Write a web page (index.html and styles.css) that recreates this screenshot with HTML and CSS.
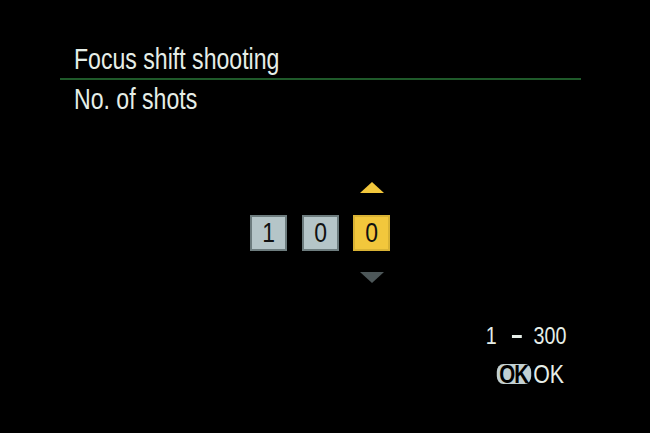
FILE: index.html
```html
<!DOCTYPE html>
<html lang="en">

<head>
    <meta charset="UTF-8">
    <meta name="viewport" content="width=device-width, initial-scale=1.0">
    <title>Focus shift shooting</title>
    <link rel="stylesheet" href="styles.css">
</head>

<body>
    <div class="screen">
        <div class="menuHead">
            <div class="title"><span class="narrow">Focus shift shooting</span></div>
        </div>
        <div class="subTitle"><span class="narrow">No. of shots</span></div>

        <div class="picker">
            <div class="digitCol">
                <span class="digit"><span class="narrowNum">1</span></span>
            </div>
            <div class="digitCol">
                <span class="digit"><span class="narrowNum">0</span></span>
            </div>
            <div class="digitCol active">
                <span class="arrow up"></span>
                <span class="digit"><span class="narrowNum">0</span></span>
                <span class="arrow down"></span>
            </div>
        </div>

        <div class="foot">
            <div class="range"><span>1</span><span class="dash"></span><span>300</span></div>
            <div class="okRow"><span class="okBtn">OK</span><span class="okText">OK</span></div>
        </div>
    </div>
</body>

</html>
```

FILE: styles.css
```css
html, body {
    margin: 0;
    background: #000;
}

.screen {
    width: 650px;
    height: 433px;
    display: flex;
    flex-direction: column;
    font-family: "Liberation Sans", Arial, sans-serif;
    color: #e6eee8;
}

/* la police de l'appareil est étroite : on resserre */
.narrow {
    display: inline-block;
    transform: scaleX(0.77);
    transform-origin: left center;
    white-space: nowrap;
}

.narrowNum {
    display: inline-block;
    transform: scaleX(0.85);
}

/* titre + ligne verte */
.menuHead {
    margin: 41px 0 0 60px;
    width: 521px;
    padding-bottom: 1px;
    border-bottom: 2px solid #1f5a2a;
}

.title {
    padding-left: 14px;
    font-size: 30px;
    line-height: 36px;
}

.subTitle {
    padding-left: 74px;
    margin-top: 1px;
    font-size: 30px;
    line-height: 36px;
}

.picker {
    display: flex;
    gap: 15px;
    margin: 65px 0 0 250px;
    align-items: center;
}

.digitCol {
    display: flex;
    flex-direction: column;
    align-items: center;
}

.digitCol:last-child {
    margin-left: -1px;
}

.digit {
    width: 33px;
    height: 32px;
    background: #b5c5c8;
    border: 2px solid #6d7c7e;
    color: #111;
    font-size: 27px;
    line-height: 33px;
    text-align: center;
}

.active .digit {
    background: #f2c73c;
    border-color: #d8b234;
}

.arrow {
    width: 0;
    height: 0;
    border-left: 12px solid transparent;
    border-right: 12px solid transparent;
}

.arrow.up {
    border-bottom: 11px solid #f2c73c;
    margin-bottom: 22px;
}

.arrow.down {
    border-top: 11px solid #4d5759;
    margin-top: 21px;
}

.foot {
    margin-top: 39px;
    width: 566px;
    display: flex;
    flex-direction: column;
    align-items: flex-end;
}

.range {
    display: flex;
    align-items: center;
    font-size: 24px;
    line-height: 28px;
    transform: scaleX(0.82);
    transform-origin: right center;
}

.dash {
    width: 12px;
    height: 3px;
    margin: 0 14px 0 19px;
    background: #e6eee8;
}

.okRow {
    display: flex;
    align-items: center;
    margin-top: 10px;
    margin-right: 2px;
    font-size: 26px;
    line-height: 28px;
    transform: scaleX(0.82);
    transform-origin: right center;
}

.okBtn {
    background: #c2d0d2;
    color: #000;
    border-radius: 8px;
    padding: 0 3px;
    height: 20px;
    line-height: 21px;
    font-size: 25px;
    font-weight: bold;
    letter-spacing: -1px;
}

.okText {
    margin-left: 3px;
}
```
